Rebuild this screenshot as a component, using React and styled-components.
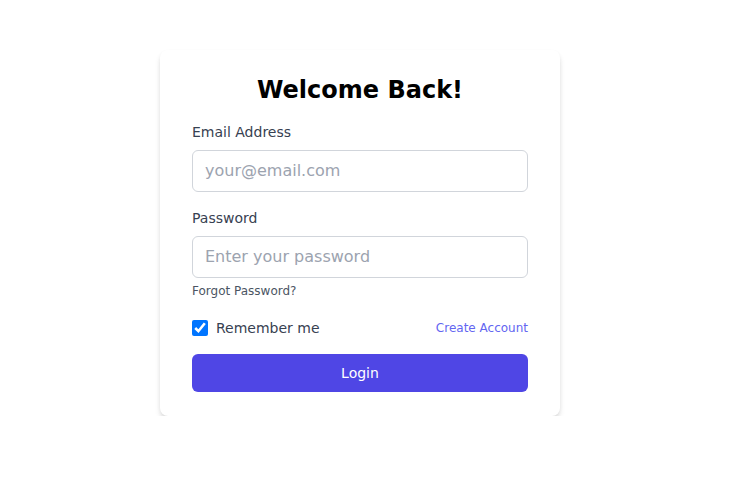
import React, { useState } from 'react'
import styled, { createGlobalStyle } from 'styled-components'

const GlobalStyle = createGlobalStyle`
    * {
        box-sizing: border-box;
    }

    body {
        margin: 0;
        background: #ffffff;
        font-family: "DejaVu Sans", sans-serif;
    }
`

const Page = styled.div`
    display: flex;
    justify-content: center;
    padding: 50px 26px 0 0;
`

const Card = styled.form`
    display: flex;
    flex-direction: column;
    width: 400px;
    padding: 24px 32px;
    background: #ffffff;
    border-radius: 8px;
    box-shadow: 0 4px 6px -1px rgba(0, 0, 0, 0.14), 0 2px 4px -1px rgba(0, 0, 0, 0.08);
`

const Title = styled.h2`
    margin: 0 0 16px;
    font-size: 24px;
    line-height: 32px;
    font-weight: 700;
    text-align: center;
    color: #000000;
`

const Field = styled.div`
    display: flex;
    flex-direction: column;
    margin-bottom: ${props => props.tight ? 0 : '16px'};
`

const Label = styled.label`
    font-size: 14px;
    line-height: 20px;
    color: #374151;
    margin-bottom: 8px;
`

const TextInput = styled.input`
    height: 42px;
    padding: 7px 12px 9px;
    font: 16px/24px "DejaVu Sans", sans-serif;
    color: #111827;
    border: 1px solid #d1d5db;
    border-radius: 6px;
    outline: none;

    &::placeholder {
        color: #9ca3af;
    }
`

const SmallLink = styled.a`
    font-size: 12px;
    line-height: 16px;
    color: ${props => props.accent ? '#6366f1' : '#4b5563'};
    text-decoration: none;
    cursor: pointer;
`

const Forgot = styled(SmallLink)`
    margin-top: 5px;
`

const OptionsRow = styled.div`
    display: flex;
    justify-content: space-between;
    align-items: center;
    height: 20px;
    margin-top: 19px;
`

const CheckLabel = styled.label`
    display: flex;
    align-items: center;
    gap: 8px;
    font-size: 14px;
    line-height: 20px;
    color: #374151;
`

const Checkbox = styled.input`
    width: 16px;
    height: 16px;
    margin: 0;
`

const SubmitButton = styled.button`
    height: 38px;
    margin-top: 16px;
    border: 0;
    border-radius: 6px;
    background: #4f46e5;
    color: #ffffff;
    font: 14px/20px "DejaVu Sans", sans-serif;
    cursor: pointer;
`

const App = () => {
    const [remember, setRemember] = useState(true)

    return (
        <>
            <GlobalStyle />
            <Page>
                <Card onSubmit={e => e.preventDefault()}>
                    <Title>Welcome Back!</Title>

                    <Field>
                        <Label htmlFor="email">Email Address</Label>
                        <TextInput type="email" id="email" placeholder="your@email.com" />
                    </Field>

                    <Field tight>
                        <Label htmlFor="password">Password</Label>
                        <TextInput type="password" id="password" placeholder="Enter your password" />
                        <Forgot>Forgot Password?</Forgot>
                    </Field>

                    <OptionsRow>
                        <CheckLabel>
                            <Checkbox
                                type="checkbox"
                                checked={remember}
                                onChange={e => setRemember(e.target.checked)}
                            />
                            Remember me
                        </CheckLabel>
                        <SmallLink accent>Create Account</SmallLink>
                    </OptionsRow>

                    <SubmitButton type="submit">Login</SubmitButton>
                </Card>
            </Page>
        </>
    )
}

export default App
